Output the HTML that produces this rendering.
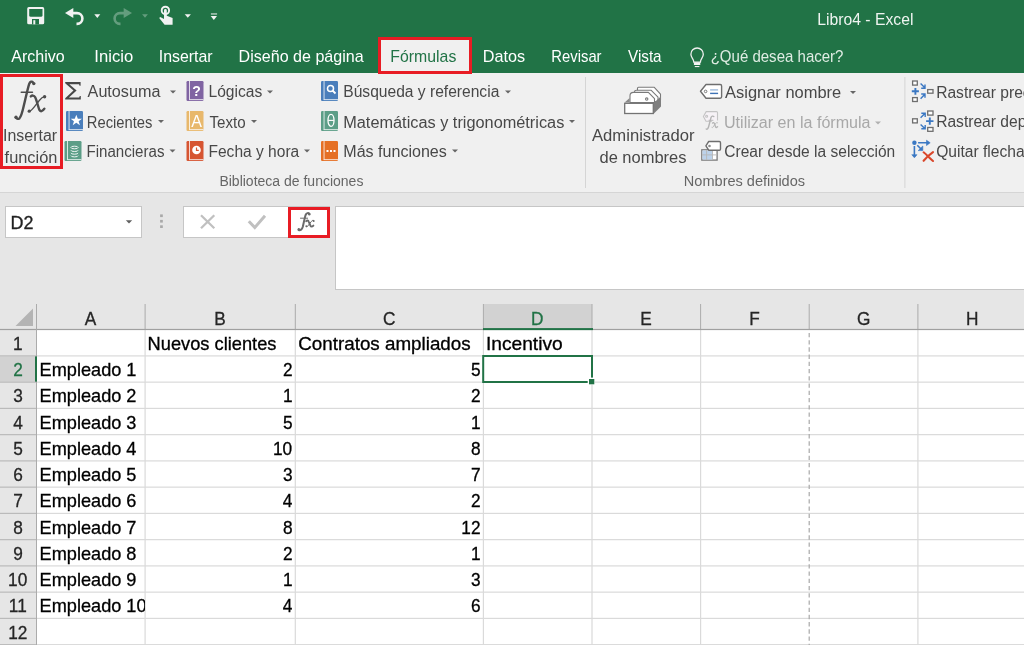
<!DOCTYPE html>
<html><head><meta charset="utf-8"><style>
html,body{margin:0;padding:0;background:#e6e6e6;overflow:hidden}
svg{display:block;will-change:transform}
text{white-space:pre}
</style></head><body>
<svg width="1024" height="645" viewBox="0 0 1024 645" font-family="Liberation Sans, sans-serif">
<defs><clipPath id="clipA"><rect x="37" y="330" width="108" height="315"/></clipPath></defs>
<rect x="0" y="0" width="1024" height="73" fill="#217346"/>
<rect x="0" y="73" width="1024" height="120" fill="#f0f0f0"/>
<rect x="0" y="192" width="1024" height="1" fill="#d5d5d5"/>
<rect x="0" y="193" width="1024" height="452" fill="#e6e6e6"/>
<rect x="379.5" y="38.5" width="91" height="34" fill="#f0f0f0" stroke="#e81c24" stroke-width="3"/>
<rect x="1.5" y="75.5" width="60" height="92" fill="none" stroke="#e81c24" stroke-width="3"/>
<rect x="585" y="77" width="1" height="111" fill="#d5d5d5"/>
<rect x="904.4" y="77" width="1" height="111" fill="#d5d5d5"/>
<rect x="5.5" y="206.5" width="136" height="31" fill="#fff" stroke="#c6c6c6"/>
<path d="M125.8 220.2 h6.4 l-3.2 3.4z" fill="#606060"/>
<rect x="160.1" y="214.4" width="2.7" height="2.7" fill="#a9a9a9"/>
<rect x="160.1" y="219.9" width="2.7" height="2.7" fill="#a9a9a9"/>
<rect x="160.1" y="225.3" width="2.7" height="2.7" fill="#a9a9a9"/>
<rect x="183.5" y="206.5" width="146" height="31" fill="#fff" stroke="#c6c6c6"/>
<path d="M201 215.3 L214.3 228.3 M214.3 215.3 L201 228.3" stroke="#c0c0c0" stroke-width="2.3" fill="none"/>
<path d="M248.8 221.2 L254.8 227.6 L265 215.8" stroke="#c0c0c0" stroke-width="3" fill="none"/>
<rect x="289.5" y="208.5" width="39" height="28" fill="#fff" stroke="#e81c24" stroke-width="3"/>
<rect x="335.5" y="206.5" width="700" height="83" fill="#fff" stroke="#c6c6c6"/>
<rect x="37" y="330" width="987" height="315" fill="#ffffff"/>
<rect x="484" y="304" width="108" height="25" fill="#d2d2d2"/>
<rect x="0" y="356.40" width="36" height="25.25" fill="#d2d2d2"/>
<rect x="37" y="355.30" width="987" height="1.2" fill="#dadada"/>
<rect x="0" y="355.30" width="36" height="1.2" fill="#bababa"/>
<rect x="37" y="381.55" width="987" height="1.2" fill="#dadada"/>
<rect x="0" y="381.55" width="36" height="1.2" fill="#bababa"/>
<rect x="37" y="407.80" width="987" height="1.2" fill="#dadada"/>
<rect x="0" y="407.80" width="36" height="1.2" fill="#bababa"/>
<rect x="37" y="434.05" width="987" height="1.2" fill="#dadada"/>
<rect x="0" y="434.05" width="36" height="1.2" fill="#bababa"/>
<rect x="37" y="460.30" width="987" height="1.2" fill="#dadada"/>
<rect x="0" y="460.30" width="36" height="1.2" fill="#bababa"/>
<rect x="37" y="486.55" width="987" height="1.2" fill="#dadada"/>
<rect x="0" y="486.55" width="36" height="1.2" fill="#bababa"/>
<rect x="37" y="512.80" width="987" height="1.2" fill="#dadada"/>
<rect x="0" y="512.80" width="36" height="1.2" fill="#bababa"/>
<rect x="37" y="539.05" width="987" height="1.2" fill="#dadada"/>
<rect x="0" y="539.05" width="36" height="1.2" fill="#bababa"/>
<rect x="37" y="565.30" width="987" height="1.2" fill="#dadada"/>
<rect x="0" y="565.30" width="36" height="1.2" fill="#bababa"/>
<rect x="37" y="591.55" width="987" height="1.2" fill="#dadada"/>
<rect x="0" y="591.55" width="36" height="1.2" fill="#bababa"/>
<rect x="37" y="617.80" width="987" height="1.2" fill="#dadada"/>
<rect x="0" y="617.80" width="36" height="1.2" fill="#bababa"/>
<rect x="37" y="644.05" width="987" height="1.2" fill="#dadada"/>
<rect x="0" y="644.05" width="36" height="1.2" fill="#bababa"/>
<rect x="144.50" y="330" width="1.2" height="315" fill="#dadada"/>
<rect x="144.60" y="304" width="1" height="25" fill="#ababab"/>
<rect x="294.70" y="330" width="1.2" height="315" fill="#dadada"/>
<rect x="294.80" y="304" width="1" height="25" fill="#ababab"/>
<rect x="482.80" y="330" width="1.2" height="315" fill="#dadada"/>
<rect x="482.90" y="304" width="1" height="25" fill="#ababab"/>
<rect x="591.40" y="330" width="1.2" height="315" fill="#dadada"/>
<rect x="591.50" y="304" width="1" height="25" fill="#ababab"/>
<rect x="700.00" y="330" width="1.2" height="315" fill="#dadada"/>
<rect x="700.10" y="304" width="1" height="25" fill="#ababab"/>
<line x1="809.2" y1="332.9" x2="809.2" y2="645" stroke="#a8a8a8" stroke-width="1.2" stroke-dasharray="4.3 2.93"/>
<rect x="808.70" y="304" width="1" height="25" fill="#ababab"/>
<rect x="917.30" y="330" width="1.2" height="315" fill="#dadada"/>
<rect x="917.40" y="304" width="1" height="25" fill="#ababab"/>
<rect x="0" y="328.9" width="1024" height="1.2" fill="#a0a0a0"/>
<rect x="36" y="304" width="1" height="341" fill="#ababab"/>
<path d="M15.5 326 L33 326 L33 308.5 Z" fill="#b4b4b4"/>
<rect x="483" y="328.1" width="110" height="2" fill="#217346"/>
<rect x="35" y="356.40" width="2" height="25.25" fill="#217346"/>
<rect x="483.2" y="356" width="108.8" height="26" fill="none" stroke="#217346" stroke-width="2"/>
<rect x="587.7" y="377.6" width="7" height="7" fill="#ffffff"/>
<rect x="589" y="379" width="5.3" height="5.3" fill="#217346"/>
<rect x="27.2" y="7.1" width="17" height="17.2" rx="1.6" fill="#f2f2f2"/><path d="M29.2 8.9 h13.3 v6.4 a1.5 1.5 0 0 1 -1.5 1.5 h-10.3 a1.5 1.5 0 0 1 -1.5 -1.5z" fill="#217346"/><rect x="32" y="19" width="7" height="5.3" fill="#217346"/><rect x="33.3" y="20.2" width="2" height="4.1" fill="#f2f2f2"/>
<path d="M69.5 13.1 h7.5 a5.4 5.4 0 0 1 0 10.8 h-0.5" stroke="#f2f2f2" stroke-width="2.6" fill="none"/><path d="M65 13.1 L73.3 8.1 L73.3 18.1 Z" fill="#f2f2f2"/>
<path d="M94.3 14.2 h6 l-3 3.7z" fill="#f2f2f2"/>
<g opacity="0.3"><path d="M127.5 13.1 h-7.5 a5.4 5.4 0 0 0 0 10.8 h0.5" stroke="#ffffff" stroke-width="2.6" fill="none"/><path d="M132 13.1 L123.7 8.1 L123.7 18.1 Z" fill="#fff"/><path d="M142.1 14.2 h5.8 l-2.9 3.5z" fill="#fff"/></g>
<circle cx="165.4" cy="10.4" r="3.7" stroke="#f2f2f2" stroke-width="1.9" fill="none"/><path d="M164 10.5 a1.4 1.4 0 0 1 2.8 0 v5.3 l5.8 2.2 v6.8 h-8 l-5.4 -6.8 l1 -0.9 l3.8 1.8z" fill="#f2f2f2"/>
<path d="M184.7 14.3 h6.2 l-3.1 3.5z" fill="#f2f2f2"/>
<rect x="210.9" y="13.1" width="6.2" height="1.7" fill="#f2f2f2" opacity="0.6"/><path d="M210.7 16 h6.3 l-3.15 3.9z" fill="#f2f2f2"/>
<path d="M693.8 62.2 C693.8 59,690.9 57.8,690.9 54.2 A6.2 6.2 0 0 1 703.3 54.2 C703.3 57.8,700.4 59,700.4 62.2 Z" stroke="#f0f0f0" stroke-width="1.3" fill="none"/><rect x="693.9" y="62.3" width="6.4" height="2.7" fill="#f4f4f4"/><rect x="694.8" y="66" width="4.6" height="1.1" fill="#f0f0f0"/>
<g fill="none" stroke="#4d4d4d" stroke-linecap="round">
<path d="M33 82.4 C32 81,30 81.6,29.2 83.8 C27.8 88,25.2 100,23.9 105.3 C22.6 111,21.6 116,19.5 118.3 C18.3 119.3,16.8 119,16.2 118" stroke-width="2.4"/>
<path d="M21.2 92.3 H32.5" stroke-width="1.4"/>
<path d="M30.8 96.4 C32 95.3,34 95,35.2 97.3 C36.5 100,38 106,39.3 109.8 C40.3 112,42.5 111.6,44.4 108.7" stroke-width="2.4"/>
<path d="M44.7 96.4 C42.5 97,40.5 99,39.3 100.5 L34.5 106.6 C32.8 108.8,31 111,29.3 111.3" stroke-width="1.3"/>
</g><g fill="#4d4d4d"><circle cx="33.8" cy="83.6" r="1.7"/><circle cx="16" cy="117.3" r="1.7"/><circle cx="44.6" cy="96.7" r="1.7"/><circle cx="29.2" cy="111.2" r="1.6"/></g>
<path d="M65.2 82 H80.6 V85.8 H79.6 L79 84.2 H69.3 L76.6 90.6 L68.9 97.5 H79.2 L79.8 95.9 H80.8 V99.6 H65.2 V98.3 L73.5 90.6 L65.2 83.3 Z" fill="#484848"/>
<g transform="translate(66,111)">
<rect x="0" y="0" width="17" height="20" rx="1.2" fill="#4a7ebb"/>
<rect x="2.6" y="0" width="0.9" height="18.6" fill="#fff" opacity="0.85"/>
<rect x="2.6" y="18.2" width="14.4" height="0.9" fill="#fff" opacity="0.85"/>
<path d="M10.3 3.8 l1.55 3.9 h4.1 l-3.3 2.5 l1.25 4.1 l-3.6 -2.6 l-3.6 2.6 l1.25 -4.1 l-3.3 -2.5 h4.1z" fill="#fff"/>
</g>
<g transform="translate(64.5,141)">
<rect x="0" y="0" width="17" height="20" rx="1.2" fill="#5c9e87"/>
<rect x="2.6" y="0" width="0.9" height="18.6" fill="#fff" opacity="0.85"/>
<rect x="2.6" y="18.2" width="14.4" height="0.9" fill="#fff" opacity="0.85"/>
<g stroke="#fff" stroke-width="1" fill="none" opacity="0.9"><ellipse cx="10" cy="6.5" rx="3.6" ry="1.3"/><path d="M6.4 9.2 a3.6 1.3 0 0 0 7.2 0 M6.4 11.9 a3.6 1.3 0 0 0 7.2 0 M6.4 14.6 a3.6 1.3 0 0 0 7.2 0"/></g>
</g>
<g transform="translate(186.5,81)">
<rect x="0" y="0" width="17" height="20" rx="1.2" fill="#8064a2"/>
<rect x="2.6" y="0" width="0.9" height="18.6" fill="#fff" opacity="0.85"/>
<rect x="2.6" y="18.2" width="14.4" height="0.9" fill="#fff" opacity="0.85"/>
<text x="10" y="15" font-size="14" font-weight="bold" fill="#fff" text-anchor="middle">?</text>
</g>
<g transform="translate(186.5,111)">
<rect x="0" y="0" width="17" height="20" rx="1.2" fill="#e8b86c"/>
<rect x="2.6" y="0" width="0.9" height="18.6" fill="#fff" opacity="0.85"/>
<rect x="2.6" y="18.2" width="14.4" height="0.9" fill="#fff" opacity="0.85"/>
<text x="10" y="16" font-size="16" fill="#fff" text-anchor="middle">A</text>
</g>
<g transform="translate(186.5,141)">
<rect x="0" y="0" width="17" height="20" rx="1.2" fill="#d65532"/>
<rect x="2.6" y="0" width="0.9" height="18.6" fill="#fff" opacity="0.85"/>
<rect x="2.6" y="18.2" width="14.4" height="0.9" fill="#fff" opacity="0.85"/>
<circle cx="10" cy="9" r="4.3" fill="#fff"/><path d="M10 6.5 v2.8 h2.3" stroke="#d65532" stroke-width="1.2" fill="none"/>
</g>
<g transform="translate(321,81)">
<rect x="0" y="0" width="17" height="20" rx="1.2" fill="#4a7ebb"/>
<rect x="2.6" y="0" width="0.9" height="18.6" fill="#fff" opacity="0.85"/>
<rect x="2.6" y="18.2" width="14.4" height="0.9" fill="#fff" opacity="0.85"/>
<circle cx="9.5" cy="7.5" r="3" stroke="#fff" stroke-width="1.5" fill="none"/><path d="M11.5 9.5 l3 3" stroke="#fff" stroke-width="1.8"/>
</g>
<g transform="translate(321,111)">
<rect x="0" y="0" width="17" height="20" rx="1.2" fill="#5c9e87"/>
<rect x="2.6" y="0" width="0.9" height="18.6" fill="#fff" opacity="0.85"/>
<rect x="2.6" y="18.2" width="14.4" height="0.9" fill="#fff" opacity="0.85"/>
<ellipse cx="10" cy="9.4" rx="3" ry="6" fill="none" stroke="#fff" stroke-width="1.3"/><path d="M7.2 9.4 h5.6" stroke="#fff" stroke-width="1.1"/>
</g>
<g transform="translate(321,141)">
<rect x="0" y="0" width="17" height="20" rx="1.2" fill="#e57025"/>
<rect x="2.6" y="0" width="0.9" height="18.6" fill="#fff" opacity="0.85"/>
<rect x="2.6" y="18.2" width="14.4" height="0.9" fill="#fff" opacity="0.85"/>
<rect x="5.5" y="9" width="2" height="2" fill="#fff"/><rect x="9" y="9" width="2" height="2" fill="#fff"/><rect x="12.5" y="9" width="2" height="2" fill="#fff"/>
</g>
<path d="M170 90.6 h6 l-3 3z" fill="#666"/>
<path d="M158 120 h6 l-3 3z" fill="#666"/>
<path d="M169.5 149.5 h6 l-3 3z" fill="#666"/>
<path d="M267 90.6 h6 l-3 3z" fill="#666"/>
<path d="M251 120 h6 l-3 3z" fill="#666"/>
<path d="M304 149.5 h6 l-3 3z" fill="#666"/>
<path d="M505 90.6 h6 l-3 3z" fill="#666"/>
<path d="M569 120 h6 l-3 3z" fill="#666"/>
<path d="M452 149.5 h6 l-3 3z" fill="#666"/>
<path d="M850 91 h6 l-3 3z" fill="#666"/>
<path d="M875 121.5 h6 l-3 3z" fill="#b0b0b0"/>
<g stroke="#7a7a7a" stroke-width="1.1" fill="#fff" stroke-linejoin="round">
<path d="M637.5 96 V88.3 Q637.5 87.3 638.5 87.3 H654.3 L660.5 94.2 V100 Z"/>
<path d="M634.5 99 V92 Q634.5 90.2 636.5 90.2 H651 L658 97.2 V102 Z"/>
<path d="M630 102.5 V95.8 Q630 92.4 633.5 92.4 H648.4 L654.5 98.7 V102.5 Z"/>
<circle cx="646.7" cy="99.1" r="1.2"/>
</g>
<path d="M624.6 102.4 L629.6 98 V102.4Z" fill="#8a8a8a"/>
<path d="M653.7 102.9 L661 96.3 V106.6 L653.7 113.8 Z" fill="#7f7f7f"/>
<rect x="624.7" y="103.3" width="28.6" height="10.2" fill="#fff" stroke="#737373" stroke-width="1.3"/>
<path d="M700.5 91.3 L706 84.5 H720.2 Q721.6 84.5 721.6 86 V96.8 Q721.6 98.2 720.2 98.2 H706 Z" stroke="#6e6e6e" stroke-width="1.4" fill="#fff" stroke-linejoin="round"/><circle cx="705.6" cy="91.4" r="1.3" fill="none" stroke="#777" stroke-width="1"/><path d="M710.1 89.9 h8" stroke="#a6c0de" stroke-width="1.5"/><path d="M710.1 93.4 h8" stroke="#3f73b6" stroke-width="1.4"/>
<g fill="none" stroke="#c4c4c4" stroke-width="1.1">
<path d="M712 121.2 H706 L703.4 116.4 L706.2 111.6 H716.5 Q717.5 111.6 717.5 112.6 V120.5" fill="#f6f2f6"/>
<circle cx="706.6" cy="116.2" r="1"/>
</g>
<g fill="none" stroke="#b4b4b4" stroke-linecap="round">
<path d="M713.8 116.6 C713 115.8,711.6 116,711 117.6 L708.6 126.8 C708 129,707 129.6,706.2 129" stroke-width="1.4"/>
<path d="M709 120.3 H713" stroke-width="0.9"/>
<path d="M712.5 123 C713.2 122.4,714 122.6,714.4 123.6 L715.6 127 C716 127.8,716.8 127.6,717.6 126.8" stroke-width="1.3"/>
<path d="M717.6 122.8 C717 122.3,716.2 122.6,715.5 123.6 L713 127 C712.6 127.8,712 127.9,711.8 127.6" stroke-width="0.9"/>
</g>
<rect x="701.8" y="149.8" width="15.3" height="10.3" fill="#fff" stroke="#7a7a7a" stroke-width="1.3"/>
<rect x="702.5" y="150.5" width="10" height="9" fill="#bcd2ea"/>
<path d="M706.6 150 V160 M712.5 150 V160 M702 154.9 H717" stroke="#b8b8b8" stroke-width="0.9"/>
<path d="M705.9 145.8 L708.7 141.5 H719.3 Q720.5 141.5 720.5 142.7 V149 Q720.5 150.2 719.3 150.2 H708.7 Z" fill="#fff" stroke="#6e6e6e" stroke-width="1.4" stroke-linejoin="round"/>
<circle cx="709.5" cy="146" r="1.3" fill="#8a8a8a"/>
<g stroke="#6e6e6e" stroke-width="1.3" fill="#fff">
<rect x="912.6" y="81" width="4.7" height="4.1"/><rect x="912.6" y="97.6" width="4.7" height="3.9"/><rect x="927.7" y="89.6" width="5.3" height="3.6"/></g>
<path d="M911.8 91.3 h7.1 M915.4 87.9 v6.8" stroke="#3b78c3" stroke-width="1.9"/>
<path d="M920.6 83.6 L924.6 87.6 M921.2 88.2 H925 V84.4 M920.6 98.8 L924.6 94.6 M921.2 94 H925 V97.8" stroke="#3b78c3" stroke-width="1.4" fill="none"/>
<g stroke="#6e6e6e" stroke-width="1.3" fill="#fff">
<rect x="912.6" y="118.8" width="4.7" height="4.1"/><rect x="927.7" y="111" width="5.3" height="4.1"/><rect x="927.7" y="127.5" width="5.3" height="3.8"/></g>
<path d="M926.1 121.1 h7.4 M929.8 117.5 v7.2" stroke="#3b78c3" stroke-width="1.9"/>
<path d="M920.6 117.8 L924.8 113.6 M921.3 113.2 H925.2 V117 M920.6 124.4 L924.8 128.4 M921.3 128.8 H925.2 V125" stroke="#3b78c3" stroke-width="1.4" fill="none"/>
<circle cx="914.4" cy="142.8" r="2.2" fill="#3b78c3"/>
<path d="M914.4 146 V157 M918.1 142.8 H929 M917.3 145.3 L922 150" stroke="#3b78c3" stroke-width="1.6" fill="none"/>
<path d="M911.8 154.7 L914.4 157.8 L917 154.7 Z M926.5 140.2 L930.2 142.8 L926.5 145.5 Z M918.2 150.6 H922.8 V146 Z" fill="#3b78c3" stroke="#3b78c3" stroke-width="0.6" stroke-linejoin="round"/>
<path d="M923.6 152.3 C927 155,929.5 158,933 161 M933 152.2 C929 155,926 158,923.6 160.8" stroke="#d9472b" stroke-width="2.1" fill="none" stroke-linecap="round"/>
<g fill="none" stroke="#6a6a6a" stroke-linecap="round">
<path d="M309.4 213.8 C308.5 212.6,306.5 212.8,305.6 215 C304.6 218,303.5 224,302.8 226.8 C302 229.6,300.5 230.6,298.6 230" stroke-width="2"/>
<path d="M300.5 218.2 H307.6" stroke-width="1"/>
<g transform="translate(0.6,0)"><path d="M305.6 221.2 C306.4 220.2,307.6 220.2,308.2 221.8 L309.8 225.6 C310.3 227,311.5 227,312.8 225.6" stroke-width="1.9"/>
<path d="M313.3 220.6 C312.6 220,311.8 220.2,310.8 221.4 L307.4 225.8 C306.8 226.8,306 226.9,305.6 226.5" stroke-width="1"/></g>
</g><g fill="#6a6a6a"><circle cx="309.3" cy="214.2" r="1.2"/><circle cx="298.8" cy="229.3" r="1.2"/><circle cx="313.6" cy="220.9" r="1"/><circle cx="306.4" cy="226.3" r="1"/></g>
<text x="817.27" y="24.60" font-size="17.0" fill="#eef4f0" textLength="96.17" lengthAdjust="spacingAndGlyphs">Libro4 - Excel</text>
<text x="11.20" y="62.30" font-size="16.6" fill="#ffffff" textLength="53.45" lengthAdjust="spacingAndGlyphs">Archivo</text>
<text x="94.30" y="62.30" font-size="16.6" fill="#ffffff" textLength="38.88" lengthAdjust="spacingAndGlyphs">Inicio</text>
<text x="158.76" y="62.30" font-size="16.6" fill="#ffffff" textLength="53.92" lengthAdjust="spacingAndGlyphs">Insertar</text>
<text x="238.54" y="62.30" font-size="16.6" fill="#ffffff" textLength="125.15" lengthAdjust="spacingAndGlyphs">Diseño de página</text>
<text x="390.36" y="62.30" font-size="16.6" fill="#217346" textLength="65.93" lengthAdjust="spacingAndGlyphs">Fórmulas</text>
<text x="482.73" y="62.30" font-size="16.6" fill="#ffffff" textLength="42.37" lengthAdjust="spacingAndGlyphs">Datos</text>
<text x="551.34" y="62.30" font-size="16.6" fill="#ffffff" textLength="50.23" lengthAdjust="spacingAndGlyphs">Revisar</text>
<text x="628.00" y="62.30" font-size="16.6" fill="#ffffff" textLength="33.60" lengthAdjust="spacingAndGlyphs">Vista</text>
<text x="710.66" y="61.90" font-size="16.6" fill="#dfece3" textLength="132.81" lengthAdjust="spacingAndGlyphs">¿Qué desea hacer?</text>
<text x="3.06" y="140.80" font-size="15.6" fill="#484848" textLength="54.02" lengthAdjust="spacingAndGlyphs">Insertar</text>
<text x="4.60" y="162.50" font-size="15.6" fill="#484848" textLength="52.82" lengthAdjust="spacingAndGlyphs">función</text>
<text x="87.60" y="97.30" font-size="15.6" fill="#484848" textLength="72.80" lengthAdjust="spacingAndGlyphs">Autosuma</text>
<text x="86.85" y="127.50" font-size="15.6" fill="#484848" textLength="65.61" lengthAdjust="spacingAndGlyphs">Recientes</text>
<text x="86.42" y="156.80" font-size="15.6" fill="#484848" textLength="78.05" lengthAdjust="spacingAndGlyphs">Financieras</text>
<text x="208.48" y="97.30" font-size="15.6" fill="#484848">Lógicas</text>
<text x="209.46" y="127.50" font-size="15.6" fill="#484848" textLength="36.15" lengthAdjust="spacingAndGlyphs">Texto</text>
<text x="208.49" y="156.80" font-size="15.6" fill="#484848" textLength="90.72" lengthAdjust="spacingAndGlyphs">Fecha y hora</text>
<text x="343.28" y="97.30" font-size="15.6" fill="#484848">Búsqueda y referencia</text>
<text x="343.23" y="127.50" font-size="15.6" fill="#484848" textLength="221.08" lengthAdjust="spacingAndGlyphs">Matemáticas y trigonométricas</text>
<text x="343.25" y="156.80" font-size="15.6" fill="#484848" textLength="103.56" lengthAdjust="spacingAndGlyphs">Más funciones</text>
<text x="219.41" y="185.90" font-size="14.0" fill="#666666">Biblioteca de funciones</text>
<text x="592.00" y="141.10" font-size="15.6" fill="#484848" textLength="102.58" lengthAdjust="spacingAndGlyphs">Administrador</text>
<text x="599.48" y="162.50" font-size="15.6" fill="#484848" textLength="87.03" lengthAdjust="spacingAndGlyphs">de nombres</text>
<text x="725.00" y="97.60" font-size="15.6" fill="#484848" textLength="116.27" lengthAdjust="spacingAndGlyphs">Asignar nombre</text>
<text x="723.99" y="127.60" font-size="15.6" fill="#a8a8a8" textLength="146.60" lengthAdjust="spacingAndGlyphs">Utilizar en la fórmula</text>
<text x="724.27" y="157.30" font-size="15.6" fill="#484848" textLength="171.00" lengthAdjust="spacingAndGlyphs">Crear desde la selección</text>
<text x="683.86" y="185.80" font-size="14.0" fill="#666666" textLength="121.19" lengthAdjust="spacingAndGlyphs">Nombres definidos</text>
<text x="936.18" y="97.70" font-size="15.6" fill="#484848">Rastrear precedentes</text>
<text x="936.18" y="127.10" font-size="15.6" fill="#484848">Rastrear dependientes</text>
<text x="936.17" y="156.90" font-size="15.6" fill="#484848">Quitar flechas</text>
<text x="10.60" y="228.70" font-size="18.0" fill="#222222" textLength="22.93" lengthAdjust="spacingAndGlyphs" stroke="#222222" stroke-width="0.3">D2</text>
<text x="84.75" y="325.00" font-size="17.8" fill="#262626" textLength="11.52" lengthAdjust="spacingAndGlyphs" stroke="#262626" stroke-width="0.3">A</text>
<text x="214.13" y="325.00" font-size="17.8" fill="#262626" textLength="11.52" lengthAdjust="spacingAndGlyphs" stroke="#262626" stroke-width="0.3">B</text>
<text x="383.01" y="325.00" font-size="17.8" fill="#262626" textLength="12.47" lengthAdjust="spacingAndGlyphs" stroke="#262626" stroke-width="0.3">C</text>
<text x="531.09" y="325.00" font-size="17.8" fill="#217346" textLength="12.47" lengthAdjust="spacingAndGlyphs" stroke="#217346" stroke-width="0.3">D</text>
<text x="640.23" y="325.00" font-size="17.8" fill="#262626" textLength="11.52" lengthAdjust="spacingAndGlyphs" stroke="#262626" stroke-width="0.3">E</text>
<text x="749.23" y="325.00" font-size="17.8" fill="#262626" textLength="10.55" lengthAdjust="spacingAndGlyphs" stroke="#262626" stroke-width="0.3">F</text>
<text x="857.08" y="325.00" font-size="17.8" fill="#262626" textLength="13.43" lengthAdjust="spacingAndGlyphs" stroke="#262626" stroke-width="0.3">G</text>
<text x="966.00" y="325.00" font-size="17.8" fill="#262626" textLength="12.47" lengthAdjust="spacingAndGlyphs" stroke="#262626" stroke-width="0.3">H</text>
<text x="13.01" y="349.95" font-size="17.8" fill="#262626" textLength="9.60" lengthAdjust="spacingAndGlyphs" stroke="#262626" stroke-width="0.3">1</text>
<text x="13.14" y="376.20" font-size="17.8" fill="#217346" textLength="9.60" lengthAdjust="spacingAndGlyphs" stroke="#217346" stroke-width="0.3">2</text>
<text x="13.28" y="402.45" font-size="17.8" fill="#262626" textLength="9.60" lengthAdjust="spacingAndGlyphs" stroke="#262626" stroke-width="0.3">3</text>
<text x="13.28" y="428.70" font-size="17.8" fill="#262626" textLength="9.60" lengthAdjust="spacingAndGlyphs" stroke="#262626" stroke-width="0.3">4</text>
<text x="13.28" y="454.95" font-size="17.8" fill="#262626" textLength="9.60" lengthAdjust="spacingAndGlyphs" stroke="#262626" stroke-width="0.3">5</text>
<text x="13.14" y="481.20" font-size="17.8" fill="#262626" textLength="9.60" lengthAdjust="spacingAndGlyphs" stroke="#262626" stroke-width="0.3">6</text>
<text x="13.14" y="507.45" font-size="17.8" fill="#262626" textLength="9.60" lengthAdjust="spacingAndGlyphs" stroke="#262626" stroke-width="0.3">7</text>
<text x="13.28" y="533.70" font-size="17.8" fill="#262626" textLength="9.60" lengthAdjust="spacingAndGlyphs" stroke="#262626" stroke-width="0.3">8</text>
<text x="13.14" y="559.95" font-size="17.8" fill="#262626" textLength="9.60" lengthAdjust="spacingAndGlyphs" stroke="#262626" stroke-width="0.3">9</text>
<text x="8.07" y="586.20" font-size="17.8" fill="#262626" textLength="19.21" lengthAdjust="spacingAndGlyphs" stroke="#262626" stroke-width="0.3">10</text>
<text x="8.85" y="612.45" font-size="17.8" fill="#262626" textLength="17.92" lengthAdjust="spacingAndGlyphs" stroke="#262626" stroke-width="0.3">11</text>
<text x="8.21" y="638.70" font-size="17.8" fill="#262626" textLength="19.21" lengthAdjust="spacingAndGlyphs" stroke="#262626" stroke-width="0.3">12</text>
<text x="147.57" y="349.95" font-size="17.8" fill="#000000" textLength="128.90" lengthAdjust="spacingAndGlyphs" stroke="#000000" stroke-width="0.3">Nuevos clientes</text>
<text x="298.22" y="349.95" font-size="17.8" fill="#000000" textLength="172.47" lengthAdjust="spacingAndGlyphs" stroke="#000000" stroke-width="0.3">Contratos ampliados</text>
<text x="485.90" y="349.95" font-size="17.8" fill="#000000" textLength="76.78" lengthAdjust="spacingAndGlyphs" stroke="#000000" stroke-width="0.3">Incentivo</text>
<text x="39.58" y="376.20" font-size="17.8" fill="#000000" textLength="96.90" lengthAdjust="spacingAndGlyphs" stroke="#000000" stroke-width="0.3" clip-path="url(#clipA)">Empleado 1</text>
<text x="282.90" y="376.20" font-size="17.8" fill="#000000" textLength="9.60" lengthAdjust="spacingAndGlyphs" stroke="#000000" stroke-width="0.3">2</text>
<text x="470.90" y="376.20" font-size="17.8" fill="#000000" textLength="9.60" lengthAdjust="spacingAndGlyphs" stroke="#000000" stroke-width="0.3">5</text>
<text x="39.58" y="402.45" font-size="17.8" fill="#000000" textLength="96.90" lengthAdjust="spacingAndGlyphs" stroke="#000000" stroke-width="0.3" clip-path="url(#clipA)">Empleado 2</text>
<text x="282.90" y="402.45" font-size="17.8" fill="#000000" textLength="9.60" lengthAdjust="spacingAndGlyphs" stroke="#000000" stroke-width="0.3">1</text>
<text x="470.90" y="402.45" font-size="17.8" fill="#000000" textLength="9.60" lengthAdjust="spacingAndGlyphs" stroke="#000000" stroke-width="0.3">2</text>
<text x="39.58" y="428.70" font-size="17.8" fill="#000000" textLength="96.90" lengthAdjust="spacingAndGlyphs" stroke="#000000" stroke-width="0.3" clip-path="url(#clipA)">Empleado 3</text>
<text x="282.90" y="428.70" font-size="17.8" fill="#000000" textLength="9.60" lengthAdjust="spacingAndGlyphs" stroke="#000000" stroke-width="0.3">5</text>
<text x="470.90" y="428.70" font-size="17.8" fill="#000000" textLength="9.60" lengthAdjust="spacingAndGlyphs" stroke="#000000" stroke-width="0.3">1</text>
<text x="39.58" y="454.95" font-size="17.8" fill="#000000" textLength="96.90" lengthAdjust="spacingAndGlyphs" stroke="#000000" stroke-width="0.3" clip-path="url(#clipA)">Empleado 4</text>
<text x="273.02" y="454.95" font-size="17.8" fill="#000000" textLength="19.21" lengthAdjust="spacingAndGlyphs" stroke="#000000" stroke-width="0.3">10</text>
<text x="470.90" y="454.95" font-size="17.8" fill="#000000" textLength="9.60" lengthAdjust="spacingAndGlyphs" stroke="#000000" stroke-width="0.3">8</text>
<text x="39.58" y="481.20" font-size="17.8" fill="#000000" textLength="96.90" lengthAdjust="spacingAndGlyphs" stroke="#000000" stroke-width="0.3" clip-path="url(#clipA)">Empleado 5</text>
<text x="282.90" y="481.20" font-size="17.8" fill="#000000" textLength="9.60" lengthAdjust="spacingAndGlyphs" stroke="#000000" stroke-width="0.3">3</text>
<text x="470.90" y="481.20" font-size="17.8" fill="#000000" textLength="9.60" lengthAdjust="spacingAndGlyphs" stroke="#000000" stroke-width="0.3">7</text>
<text x="39.58" y="507.45" font-size="17.8" fill="#000000" textLength="96.90" lengthAdjust="spacingAndGlyphs" stroke="#000000" stroke-width="0.3" clip-path="url(#clipA)">Empleado 6</text>
<text x="282.63" y="507.45" font-size="17.8" fill="#000000" textLength="9.60" lengthAdjust="spacingAndGlyphs" stroke="#000000" stroke-width="0.3">4</text>
<text x="470.90" y="507.45" font-size="17.8" fill="#000000" textLength="9.60" lengthAdjust="spacingAndGlyphs" stroke="#000000" stroke-width="0.3">2</text>
<text x="39.58" y="533.70" font-size="17.8" fill="#000000" textLength="96.90" lengthAdjust="spacingAndGlyphs" stroke="#000000" stroke-width="0.3" clip-path="url(#clipA)">Empleado 7</text>
<text x="282.90" y="533.70" font-size="17.8" fill="#000000" textLength="9.60" lengthAdjust="spacingAndGlyphs" stroke="#000000" stroke-width="0.3">8</text>
<text x="461.29" y="533.70" font-size="17.8" fill="#000000" textLength="19.21" lengthAdjust="spacingAndGlyphs" stroke="#000000" stroke-width="0.3">12</text>
<text x="39.58" y="559.95" font-size="17.8" fill="#000000" textLength="96.90" lengthAdjust="spacingAndGlyphs" stroke="#000000" stroke-width="0.3" clip-path="url(#clipA)">Empleado 8</text>
<text x="282.90" y="559.95" font-size="17.8" fill="#000000" textLength="9.60" lengthAdjust="spacingAndGlyphs" stroke="#000000" stroke-width="0.3">2</text>
<text x="470.90" y="559.95" font-size="17.8" fill="#000000" textLength="9.60" lengthAdjust="spacingAndGlyphs" stroke="#000000" stroke-width="0.3">1</text>
<text x="39.58" y="586.20" font-size="17.8" fill="#000000" textLength="96.90" lengthAdjust="spacingAndGlyphs" stroke="#000000" stroke-width="0.3" clip-path="url(#clipA)">Empleado 9</text>
<text x="282.90" y="586.20" font-size="17.8" fill="#000000" textLength="9.60" lengthAdjust="spacingAndGlyphs" stroke="#000000" stroke-width="0.3">1</text>
<text x="470.90" y="586.20" font-size="17.8" fill="#000000" textLength="9.60" lengthAdjust="spacingAndGlyphs" stroke="#000000" stroke-width="0.3">3</text>
<text x="39.58" y="612.45" font-size="17.8" fill="#000000" textLength="106.99" lengthAdjust="spacingAndGlyphs" stroke="#000000" stroke-width="0.3" clip-path="url(#clipA)">Empleado 10</text>
<text x="282.63" y="612.45" font-size="17.8" fill="#000000" textLength="9.60" lengthAdjust="spacingAndGlyphs" stroke="#000000" stroke-width="0.3">4</text>
<text x="470.90" y="612.45" font-size="17.8" fill="#000000" textLength="9.60" lengthAdjust="spacingAndGlyphs" stroke="#000000" stroke-width="0.3">6</text>
</svg>
</body></html>
